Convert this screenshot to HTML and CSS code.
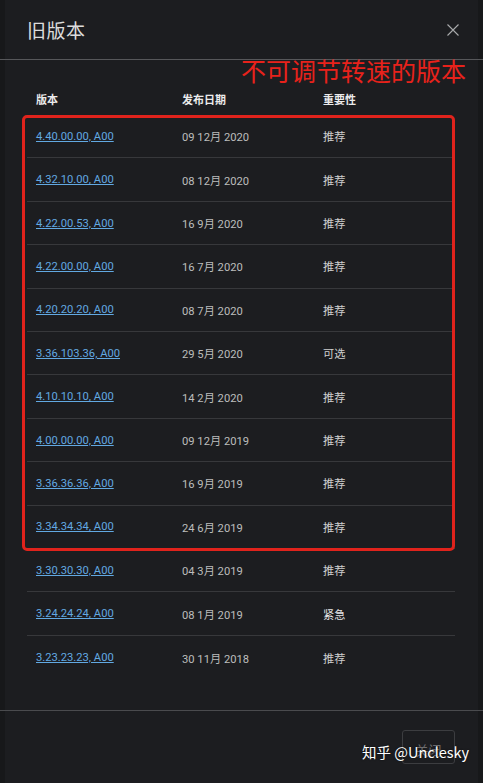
FILE: index.html
```html
<!DOCTYPE html>
<html lang="zh-CN">
<head>
    <meta charset="UTF-8">
    <title>旧版本</title>
    <link rel="stylesheet" href="styles.css">
</head>
<body>
    <div class="modal">
        <header class="modal-header">
            <h2 class="modal-title">旧版本</h2>
            <span class="close-x">
                <svg width="12" height="12" viewBox="0 0 12 12"><path d="M0.5 0.5 L11.5 11.5 M11.5 0.5 L0.5 11.5" stroke="#a9aaac" stroke-width="1.1" fill="none"/></svg>
            </span>
        </header>

        <div class="modal-body">
            <div class="note">不可调节转速的版本</div>

            <div class="table">
                <div class="row head">
                    <div class="cell">版本</div>
                    <div class="cell">发布日期</div>
                    <div class="cell">重要性</div>
                </div>
                <div class="rows">
                    <div class="mark"></div>
                    <div class="row"><div class="cell"><a href="#">4.40.00.00, A00</a></div><div class="cell date">09 12月 2020</div><div class="cell level">推荐</div></div>
                    <div class="row"><div class="cell"><a href="#">4.32.10.00, A00</a></div><div class="cell date">08 12月 2020</div><div class="cell level">推荐</div></div>
                    <div class="row"><div class="cell"><a href="#">4.22.00.53, A00</a></div><div class="cell date">16 9月 2020</div><div class="cell level">推荐</div></div>
                    <div class="row"><div class="cell"><a href="#">4.22.00.00, A00</a></div><div class="cell date">16 7月 2020</div><div class="cell level">推荐</div></div>
                    <div class="row"><div class="cell"><a href="#">4.20.20.20, A00</a></div><div class="cell date">08 7月 2020</div><div class="cell level">推荐</div></div>
                    <div class="row"><div class="cell"><a href="#">3.36.103.36, A00</a></div><div class="cell date">29 5月 2020</div><div class="cell level">可选</div></div>
                    <div class="row"><div class="cell"><a href="#">4.10.10.10, A00</a></div><div class="cell date">14 2月 2020</div><div class="cell level">推荐</div></div>
                    <div class="row"><div class="cell"><a href="#">4.00.00.00, A00</a></div><div class="cell date">09 12月 2019</div><div class="cell level">推荐</div></div>
                    <div class="row"><div class="cell"><a href="#">3.36.36.36, A00</a></div><div class="cell date">16 9月 2019</div><div class="cell level">推荐</div></div>
                    <div class="row"><div class="cell"><a href="#">3.34.34.34, A00</a></div><div class="cell date">24 6月 2019</div><div class="cell level">推荐</div></div>
                    <div class="row"><div class="cell"><a href="#">3.30.30.30, A00</a></div><div class="cell date">04 3月 2019</div><div class="cell level">推荐</div></div>
                    <div class="row"><div class="cell"><a href="#">3.24.24.24, A00</a></div><div class="cell date">08 1月 2019</div><div class="cell level urgent">紧急</div></div>
                    <div class="row"><div class="cell"><a href="#">3.23.23.23, A00</a></div><div class="cell date">30 11月 2018</div><div class="cell level">推荐</div></div>
                </div>
            </div>
        </div>

        <footer class="modal-footer">
            <button class="btn-close">关闭</button>
            <span class="watermark">知乎 @Unclesky</span>
        </footer>
    </div>
</body>
</html>
```

FILE: styles.css
```css
body {
    margin: 0;
    background-color: #17181a;
    font-family: Roboto, "Noto Sans CJK SC", sans-serif;
    color: #c8c8c8;
}

.modal {
    position: relative;
    margin: 0 5px;
    height: 783px;
    background-color: #1c1d20;
}

.modal-header {
    display: flex;
    align-items: center;
    justify-content: space-between;
    height: 59px;
    margin: 0 -5px;
    padding: 0 24px 0 27px;
    border-bottom: 1px solid #56575a;
}

.modal-title {
    margin: 0;
    font-family: "Noto Sans CJK SC", sans-serif;
    font-size: 19px;
    font-weight: 400;
    color: #dcdcdc;
    letter-spacing: 0.5px;
}

.close-x {
    display: flex;
    margin-top: 1px;
}

.modal-body {
    position: relative;
    padding: 23px 23px 0 22px;
    height: 627px;
}

.note {
    position: absolute;
    top: -5px;
    left: 236px;
    font-family: "Noto Sans CJK SC", sans-serif;
    font-size: 25px;
    line-height: 30px;
    color: #e8221b;
}

.row {
    display: grid;
    grid-template-columns: 146px 141px 1fr;
    align-items: center;
    height: 43.42px;
    border-bottom: 1px solid #37383b;
    box-sizing: border-box;
    font-size: 11.2px;
}

.row:last-child {
    border-bottom: none;
}

.row.head {
    height: 32px;
    border-bottom: none;
    font-family: "Noto Sans CJK SC", sans-serif;
    font-size: 11px;
    font-weight: 700;
    color: #ebebeb;
}

.cell {
    padding-left: 9px;
}

.rows {
    position: relative;
}

.mark {
    position: absolute;
    left: -5px;
    top: 0;
    width: 433px;
    height: 436px;
    border: 3px solid #e0231c;
    border-radius: 5px;
    box-sizing: border-box;
}

a {
    color: #62a9e2;
    text-decoration: underline;
}

.date {
    color: #bdbdbd;
}

.level {
    font-family: "Noto Sans CJK SC", sans-serif;
    color: #cfcfcf;
}

.level.urgent {
    color: #e6e6e6;
}

.modal-footer {
    display: flex;
    justify-content: flex-end;
    margin: 0 -5px;
    padding: 19px 28px 0 0;
    border-top: 1px solid #4a4b4e;
}

.btn-close {
    width: 53px;
    height: 34px;
    background: transparent;
    border: 1px solid #3c3d40;
    border-radius: 3px;
    font-family: "Noto Sans CJK SC", sans-serif;
    font-size: 13px;
    color: #6e6e70;
    padding: 4px 0 0;
}

.watermark {
    position: absolute;
    left: 357px;
    bottom: 21px;
    white-space: nowrap;
    font-family: "Noto Sans CJK SC", sans-serif;
    font-size: 14.5px;
    line-height: 20px;
    color: #ffffff;
    text-shadow: 0 0 2px rgba(0, 0, 0, 0.6);
}
```
